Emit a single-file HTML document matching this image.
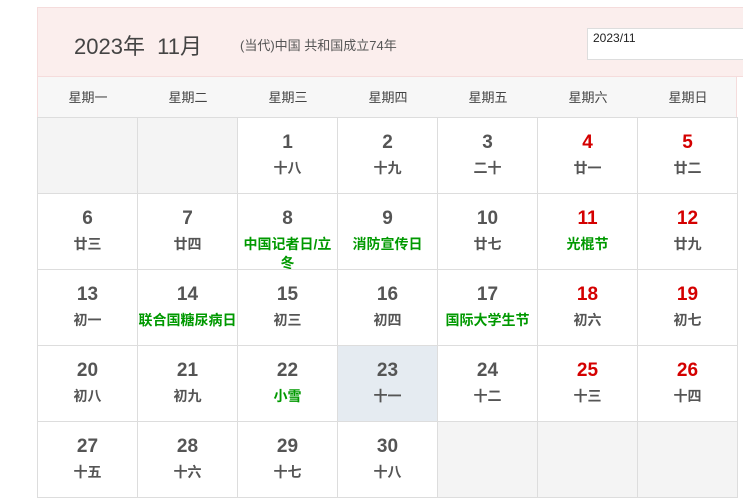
<!DOCTYPE html>
<html><head><meta charset="utf-8"><style>
*{margin:0;padding:0;box-sizing:border-box}
body{width:743px;height:490px;overflow:hidden;background:#fff;font-family:"Liberation Sans","Noto Sans CJK SC",sans-serif;position:relative}
.hd{position:absolute;left:37px;top:7px;width:720px;height:70px;background:#fbeeed;border:1px solid #f5dcdc}
.t{position:absolute;left:36px;top:21px;font-size:22px;color:#444}
.s{position:absolute;left:202px;top:27px;font-size:13px;color:#555}
.inp{position:absolute;left:549px;top:20px;width:200px;height:32px;background:#fff;border:1px solid #ddd;font-size:12px;color:#222;padding:2px 5px}
.wk{position:absolute;left:37px;top:77px;width:700px;height:41px;background:#f7f7f7;border-left:1px solid #f5dcdc;border-right:1px solid #f5dcdc}
.wk div{position:absolute;top:0;width:100px;line-height:41px;text-align:center;font-size:13px;color:#444}
.c{position:absolute;width:101px;height:77px;border:1px solid #ddd;text-align:center;background:#fff}
.c b{display:block;margin-top:13px;font-size:19px;line-height:24px;color:#555}
.c i{display:block;font-style:normal;font-weight:bold;font-size:14px;line-height:19px;color:#555;margin-top:4px;padding:0}
.g{background:#f4f4f4}.td{background:#e5ebf1}
.r b{color:#d40000}.h i{color:#090}
</style></head><body>
<div class="hd"><div class="t">2023年&nbsp; 11月</div><div class="s">(当代)中国 共和国成立74年</div><div class="inp">2023/11</div></div>
<div class="wk"><div style="left:0">星期一</div><div style="left:100px">星期二</div><div style="left:200px">星期三</div><div style="left:300px">星期四</div><div style="left:400px">星期五</div><div style="left:500px">星期六</div><div style="left:600px">星期日</div></div>
<div id="g"></div>
<script>
var d=[["",""],["",""],["1","十八"],["2","十九"],["3","二十"],["4","廿一"],["5","廿二"],
["6","廿三"],["7","廿四"],["8","中国记者日/立冬",1],["9","消防宣传日",1],["10","廿七"],["11","光棍节",1],["12","廿九"],
["13","初一"],["14","联合国糖尿病日",1],["15","初三"],["16","初四"],["17","国际大学生节",1],["18","初六"],["19","初七"],
["20","初八"],["21","初九"],["22","小雪",1],["23","十一"],["24","十二"],["25","十三"],["26","十四"],
["27","十五"],["28","十六"],["29","十七"],["30","十八"],["",""],["",""],["",""]];
var h="";d.forEach(function(x,k){var col=k%7,row=Math.floor(k/7);var cl="c";if(!x[0])cl+=" g";if(x[0]=="23")cl+=" td";if(col>=5)cl+=" r";if(x[2])cl+=" h";
h+='<div class="'+cl+'" style="left:'+(37+col*100)+'px;top:'+(117+row*76)+'px">'+(x[0]?'<b>'+x[0]+'</b><i>'+x[1]+'</i>':'')+'</div>';});
document.getElementById("g").innerHTML=h;
</script>
</body></html>
